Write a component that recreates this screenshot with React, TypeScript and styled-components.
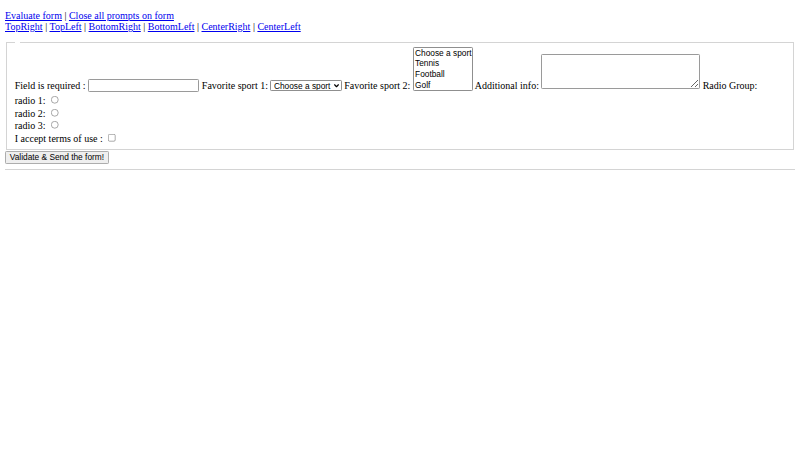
import React from "react";
import styled, { createGlobalStyle } from "styled-components";

const Global = createGlobalStyle`
  html { zoom: 0.625; }
  body {
    margin: 8px;
    font-family: "Liberation Serif", "Times New Roman", serif;
    font-size: 16px;
    color: #000;
    background: #fff;
  }
`;

const Nav = styled.nav`
  margin-top: 8px;
`;

const NavLine = styled.div`
  line-height: normal;
`;

const NavLink = styled.a`
  color: #0000ee;
  text-decoration: underline;
  cursor: pointer;
`;

const Form = styled.form`
  margin: 0;
`;

const Fieldset = styled.fieldset`
  margin: 16px 2px 0;
  padding: 0.35em 0.75em 7px;
  border: 2px groove #d4d4d4;
`;

const Legend = styled.legend`
  padding: 0 4px;
  height: 2px;
`;

const controlFont = `
  font-family: "Liberation Sans", Arial, sans-serif;
  font-size: 13.333px;
  color: #000;
`;

const TextInput = styled.input`
  ${controlFont}
  width: 178px;
  height: 21px;
  box-sizing: border-box;
  border: 1px solid #9a9a9a;
  border-radius: 2px;
  padding: 1px 2px;
  background: #fff;
`;

const DropWrap = styled.span`
  position: relative;
  display: inline-block;
`;

const Dropdown = styled.select`
  ${controlFont}
  appearance: none;
  width: 114px;
  height: 19px;
  box-sizing: border-box;
  border: 1px solid #8f8f8f;
  border-radius: 2px;
  padding: 0 14px 0 4px;
  background: #fff;
`;

const Chevron = styled.svg`
  position: absolute;
  right: 4px;
  top: 7px;
  width: 8px;
  height: 6px;
  pointer-events: none;
`;

const ListBox = styled.select`
  ${controlFont}
  width: 96px;
  height: 70px;
  box-sizing: border-box;
  border: 1px solid #8f8f8f;
  border-radius: 2px;
  background: #fff;
  overflow: hidden;
`;

const TextBox = styled.textarea`
  ${controlFont}
  width: 254px;
  height: 56px;
  box-sizing: border-box;
  border: 1px solid #9a9a9a;
  border-radius: 2px;
  vertical-align: baseline;
`;

const Options = styled.div`
  padding-top: 3px;
`;

const Row = styled.div`
  line-height: normal;
  height: 20.3px;
`;

const Radio = styled.input.attrs({ type: "radio" })`
  margin: 3px 3px 0 5px;
`;

const Check = styled.input.attrs({ type: "checkbox" })`
  margin: 3px 3px 3px 4px;
`;

const SendButton = styled.button`
  ${controlFont}
  margin-top: 1px;
  padding: 1px 6px;
  background: #efefef;
  border: 1px solid #adadad;
  border-radius: 2px;
`;

const Rule = styled.hr`
  margin: 8px 0;
  border: 0;
  border-top: 2px solid #d4d4d4;
  height: 0;
`;

const links = ["TopRight", "TopLeft", "BottomRight", "BottomLeft", "CenterRight", "CenterLeft"];
const sports = ["Choose a sport", "Tennis", "Football", "Golf"];
const radios = ["radio 1:", "radio 2:", "radio 3:"];

export default function App() {
  return (
    <>
      <Global />
      <Nav>
        <NavLine>
          <NavLink>Evaluate form</NavLink> | <NavLink>Close all prompts on form</NavLink>
        </NavLine>
        <NavLine>
          {links.map((l, i) => (
            <React.Fragment key={l}>
              {i > 0 && " | "}
              <NavLink>{l}</NavLink>
            </React.Fragment>
          ))}
        </NavLine>
      </Nav>
      <Form>
        <Fieldset>
          <Legend />
          Field is required : <TextInput type="text" /> Favorite sport 1:{" "}
          <DropWrap>
            <Dropdown defaultValue="Choose a sport">
              {sports.map((s) => (
                <option key={s}>{s}</option>
              ))}
            </Dropdown>
            <Chevron viewBox="0 0 8 6">
              <path d="M1 1.2 L4 4.4 L7 1.2" fill="none" stroke="#000" strokeWidth="1.8" strokeLinecap="round" strokeLinejoin="round" />
            </Chevron>
          </DropWrap>{" "}
          Favorite sport 2:{" "}
          <ListBox size={4}>
            {sports.map((s) => (
              <option key={s}>{s}</option>
            ))}
          </ListBox>{" "}
          Additional info: <TextBox /> Radio Group:
          <Options>
            {radios.map((r) => (
              <Row key={r}>
                {r} <Radio name="g" />
              </Row>
            ))}
            <Row>
              I accept terms of use : <Check />
            </Row>
          </Options>
        </Fieldset>
        <SendButton type="button">Validate &amp; Send the form!</SendButton>
        <Rule />
      </Form>
    </>
  );
}
